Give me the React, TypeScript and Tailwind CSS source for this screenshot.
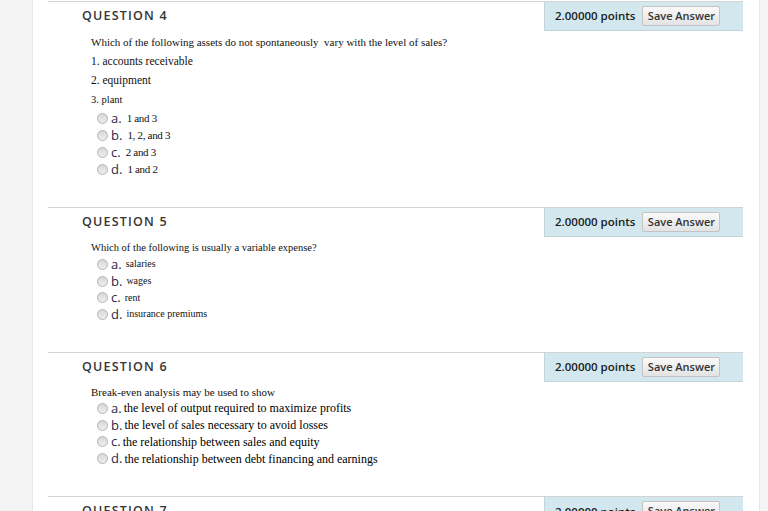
import React from 'react'

type Option = { letter: string; text: string }
type Question = {
  num: number
  lines: { text: string; cls: string }[]
  options: Option[]
  optCls: string
  gapCls: string
  rowCls: string
}

const questions: Question[] = [
  {
    num: 4,
    lines: [
      { text: 'Which of the following assets do not spontaneously  vary with the level of sales?', cls: 'text-[11px] h-[19px]' },
      { text: '1. accounts receivable', cls: 'text-[11.5px] h-[19px]' },
      { text: '2. equipment', cls: 'text-[11.5px] h-[19px]' },
      { text: '3. plant', cls: 'text-[10.5px] h-[20px]' },
    ],
    options: [
      { letter: 'a.', text: '1 and 3' },
      { letter: 'b.', text: '1, 2, and 3' },
      { letter: 'c.', text: '2 and 3' },
      { letter: 'd.', text: '1 and 2' },
    ],
    optCls: 'text-[11px] tracking-[-0.3px]',
    gapCls: 'ml-[5px]',
    rowCls: 'h-[17px]',
  },
  {
    num: 5,
    lines: [{ text: 'Which of the following is usually a variable expense?', cls: 'text-[10.5px] h-[17px]' }],
    options: [
      { letter: 'a.', text: 'salaries' },
      { letter: 'b.', text: 'wages' },
      { letter: 'c.', text: 'rent' },
      { letter: 'd.', text: 'insurance premiums' },
    ],
    optCls: 'text-[10px]',
    gapCls: 'ml-[4px]',
    rowCls: 'h-[16.7px]',
  },
  {
    num: 6,
    lines: [{ text: 'Break-even analysis may be used to show', cls: 'text-[11px] h-[16px]' }],
    options: [
      { letter: 'a.', text: 'the level of output required to maximize profits' },
      { letter: 'b.', text: 'the level of sales necessary to avoid losses' },
      { letter: 'c.', text: 'the relationship between sales and equity' },
      { letter: 'd.', text: 'the relationship between debt financing and earnings' },
    ],
    optCls: 'text-[12px] text-black',
    gapCls: 'ml-[2px]',
    rowCls: 'h-[16.9px]',
  },
]

function Radio() {
  return (
    <span className="inline-block h-[11px] w-[11px] shrink-0 rounded-full border border-[#b4b4b4] bg-gradient-to-b from-[#d8d8d8] to-[#eeeeee]" />
  )
}

function Header({ num }: { num: number }) {
  return (
    <div className="flex border-t border-[#d3d3d3]">
      <div className="flex-1 pl-[34px] pt-[5px] font-['Open_Sans',sans-serif] text-[12.5px] font-semibold tracking-[1.2px] text-[#353535]">
        QUESTION {num}
      </div>
      <div className="flex h-[29px] w-[199px] items-center border-b border-l border-[#c3d3d8] bg-[#d2e8ee] pl-[10px]">
        <span className="font-['Open_Sans',sans-serif] text-[11.5px] font-semibold text-[#1a1a1a]">2.00000 points</span>
        <button className="ml-[7px] h-[20px] w-[78px] rounded-[2px] border border-[#c4c4c4] bg-gradient-to-b from-[#fafafa] to-[#e3e3e3] font-['Open_Sans',sans-serif] text-[11px] font-semibold text-[#333]">
          Save Answer
        </button>
      </div>
    </div>
  )
}

function QuestionBlock({ q }: { q: Question }) {
  return (
    <div className="pb-[29px]">
      <Header num={q.num} />
      <div className="pl-[43px] pt-[2px] font-['Liberation_Serif',serif] text-[#111]">
        {q.lines.map(l => (
          <div key={l.text} className={`flex items-center whitespace-pre ${l.cls}`}>
            {l.text}
          </div>
        ))}
        <div className="pl-[6px]">
          {q.options.map(o => (
            <div key={o.letter} className={`flex items-center ${q.rowCls}`}>
              <Radio />
              <span className="ml-[3px] font-['Open_Sans',sans-serif] text-[13px] leading-none text-[#2a2a4a]">{o.letter}</span>
              <span className={`${q.gapCls} ${q.optCls} leading-none`}>{o.text}</span>
            </div>
          ))}
        </div>
      </div>
    </div>
  )
}

export default function App() {
  return (
    <div className="flex h-[511px] w-[768px] overflow-hidden bg-[#f3f3f3]">
      <div className="w-[33px] shrink-0 border-r border-[#e6e6e6] bg-[#f3f3f3]" />
      <div className="w-[726px] shrink-0 bg-white pl-[15px] pr-[16px] pt-[1px]">
        {questions.map(q => (
          <QuestionBlock key={q.num} q={q} />
        ))}
        <Header num={7} />
      </div>
      <div className="flex-1 border-l border-[#e6e6e6] bg-[#f5f5f5]" />
    </div>
  )
}
